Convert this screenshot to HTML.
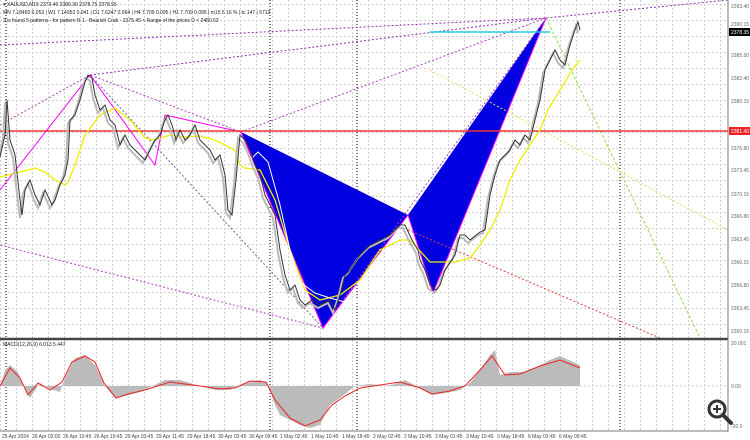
<html><head><style>body{margin:0;background:#fff;overflow:hidden}svg{display:block;font-family:"Liberation Sans",sans-serif}</style></head><body>
<svg width="750" height="440" viewBox="0 0 750 440">
<defs>
<pattern id="gv" width="16" height="440" patternUnits="userSpaceOnUse" x="0"><line x1="0.5" y1="0" x2="0.5" y2="440" stroke="#cfcfcf" stroke-dasharray="2,2"/></pattern>
<pattern id="gh" width="728" height="16" patternUnits="userSpaceOnUse" y="4"><line x1="0" y1="0.5" x2="728" y2="0.5" stroke="#cfcfcf" stroke-dasharray="2,2"/></pattern>
</defs>
<rect width="750" height="440" fill="#fff"/>
<rect x="0" y="0" width="728" height="430" fill="url(#gv)"/>
<rect x="0" y="0" width="728" height="338" fill="url(#gh)"/>
<line x1="0" y1="386" x2="728" y2="386" stroke="#cfcfcf" stroke-dasharray="2,2"/>
<g stroke="#000" stroke-dasharray="1,2"><line x1="6" y1="0" x2="6" y2="430"/><line x1="270" y1="0" x2="270" y2="430"/><line x1="357" y1="0" x2="357" y2="430"/><line x1="620" y1="0" x2="620" y2="430"/></g>
<polygon points="241,132 323,328 408,215" fill="#0000e0"/>
<polygon points="408,215 433,293 546,18" fill="#0000e0"/>
<g fill="none" stroke-width="1" stroke-dasharray="2,2">
<polyline points="0,125 90,75 241,132 323,328 0,245" stroke="#b040c0"/>
<polyline points="90,75 546,18 728,0" stroke="#9030b0"/>
<polyline points="0,45 546,18" stroke="#9030b0"/>
<polyline points="241,132 546,18" stroke="#b040c0"/>
<polyline points="323,328 546,18" stroke="#b040c0"/>
<polyline points="90,75 323,328" stroke="#7060b0"/>
<polyline points="546,18 700,338" stroke="#90e040" stroke-dasharray="3,2"/>
<polyline points="430,70 728,230" stroke="#e0e060"/>
<polyline points="408,230 660,338" stroke="#e04040"/>
</g>
<g fill="none" stroke="#f0f" stroke-width="1"><polyline points="0,190 90,75 155,165 165,115 241,132 323,328 408,215 433,293 546,18"/></g>
<line x1="0" y1="131" x2="728" y2="131" stroke="#e33" stroke-width="1.5"/>
<line x1="430" y1="32" x2="550" y2="32" stroke="#2cd" stroke-width="1.5"/>
<polyline fill="none" stroke="#ee0" stroke-width="1.3" points="0,177 20,172 35,168 45,172 55,180 65,185 68,182 75,165 85,135 100,115 115,108 130,120 145,138 155,140 170,135 185,137 200,136 215,140 225,145 235,150 240,165 245,168 260,170 275,200 290,250 305,290 320,300 340,295 360,280 380,250 400,240 410,240 430,262 455,262 470,258 480,245 490,230 500,210 510,180 520,160 530,145 540,130 548,110 560,90 572,70 580,60"/>
<polyline fill="none" stroke="#fff" stroke-width="1" points="250,160 258,152 268,162 280,205 290,250 300,282 315,293 330,298 345,302 360,300"/>
<polyline fill="none" stroke="#bbb" stroke-width="2" points="0,157 5,135 7,100 10,140 15,155 20,200 22,215 25,190 30,180 35,195 40,205 45,190 52,205 55,200 60,185 65,175 68,160 70,120 75,115 80,100 85,82 88,75 92,78 95,95 100,110 105,105 110,120 115,125 120,145 125,135 130,145 135,150 145,160 150,150 155,140 160,135 165,120 168,115 172,125 176,140 180,130 185,140 190,135 195,125 200,140 210,150 215,160 220,155 225,175 228,210 232,215 236,180 240,135 245,140 250,150 255,165 260,175 265,195 270,205 275,215 280,250 285,275 290,290 295,285 300,300 305,305 312,300 320,305 330,300 335,310 340,295 345,275 350,270 360,255 370,245 380,240 390,235 400,225 405,225 412,240 418,250 420,260 425,270 430,285 436,290 440,285 445,270 455,255 460,235 465,235 470,240 480,232 485,230 490,195 495,175 500,160 510,150 515,140 520,145 525,135 530,140 535,120 540,100 545,70 555,50 560,60 565,65 570,45 575,30 578,22 580,30" transform="translate(-2,3)"/>
<polyline fill="none" stroke="#333" stroke-width="1" points="0,157 5,135 7,100 10,140 15,155 20,200 22,215 25,190 30,180 35,195 40,205 45,190 52,205 55,200 60,185 65,175 68,160 70,120 75,115 80,100 85,82 88,75 92,78 95,95 100,110 105,105 110,120 115,125 120,145 125,135 130,145 135,150 145,160 150,150 155,140 160,135 165,120 168,115 172,125 176,140 180,130 185,140 190,135 195,125 200,140 210,150 215,160 220,155 225,175 228,210 232,215 236,180 240,135 245,140 250,150 255,165 260,175 265,195 270,205 275,215 280,250 285,275 290,290 295,285 300,300 305,305 312,300 320,305 330,300 335,310 340,295 345,275 350,270 360,255 370,245 380,240 390,235 400,225 405,225 412,240 418,250 420,260 425,270 430,285 436,290 440,285 445,270 455,255 460,235 465,235 470,240 480,232 485,230 490,195 495,175 500,160 510,150 515,140 520,145 525,135 530,140 535,120 540,100 545,70 555,50 560,60 565,65 570,45 575,30 578,22 580,30"/>
<line x1="0" y1="339" x2="728" y2="339" stroke="#444" stroke-width="2.5"/>
<path d="M0,386 L5,370 10,365 18,372 25,390 30,398 40,383 50,389 60,392 65,378 75,358 85,355 95,365 105,386 115,398 125,396 140,392 165,380 180,380 200,386 215,390 230,390 245,383 260,380 268,384 275,405 280,415 290,420 300,425 310,428 320,425 330,405 340,398 355,386 370,384 385,386 395,384 405,380 420,388 432,395 445,393 460,390 470,383 480,370 490,355 495,350 500,375 510,372 525,372 535,368 550,360 560,356 580,365 580,386 Z" fill="#bbb"/>
<polyline fill="none" stroke="#e22" stroke-width="1" points="0,386 10,368 20,378 28,395 38,383 50,390 62,382 72,362 85,356 95,362 104,383 116,398 128,394 145,390 170,382 200,386 220,389 235,388 250,381 266,382 275,400 290,418 305,426 320,420 332,405 345,396 360,388 380,385 400,382 420,388 432,394 450,391 465,386 480,370 492,356 505,375 520,374 540,366 560,360 580,368"/>
<line x1="728" y1="0" x2="728" y2="432" stroke="#777"/>
<line x1="0" y1="431" x2="728" y2="431" stroke="#777"/>
<rect x="729" y="28" width="21" height="8" fill="#000"/><rect x="729" y="127" width="21" height="8" fill="#e22"/>
<g font-size="5" fill="#666"><text x="731" y="8">2393.40</text><text x="731" y="26">2390.15</text><text x="731" y="57">2385.50</text><text x="731" y="80">2382.40</text><text x="731" y="103">2380.15</text><text x="731" y="150">2376.80</text><text x="731" y="172">2373.45</text><text x="731" y="196">2370.15</text><text x="731" y="218">2366.80</text><text x="731" y="241">2363.45</text><text x="731" y="264">2360.15</text><text x="731" y="287">2356.80</text><text x="731" y="310">2353.45</text><text x="731" y="333">2350.15</text><text x="731" y="345">20.001</text><text x="731" y="388">0.00</text><text x="731" y="428">-20.0</text></g>
<g font-size="5" fill="#fff"><text x="731" y="34">2378.35</text><text x="731" y="133">2381.40</text></g>
<g font-size="5" fill="#444"><text x="2" y="438">25 Apr 2024</text><text x="32" y="438">26 Apr 02:00</text><text x="63" y="438">26 Apr 10:45</text><text x="94" y="438">26 Apr 19:45</text><text x="125" y="438">29 Apr 03:45</text><text x="156" y="438">29 Apr 11:45</text><text x="187" y="438">29 Apr 18:45</text><text x="218" y="438">30 Apr 02:45</text><text x="249" y="438">30 Apr 09:45</text><text x="280" y="438">1 May 02:45</text><text x="311" y="438">1 May 10:45</text><text x="342" y="438">1 May 18:45</text><text x="373" y="438">2 May 02:45</text><text x="404" y="438">2 May 10:45</text><text x="435" y="438">3 May 01:45</text><text x="466" y="438">3 May 10:45</text><text x="497" y="438">3 May 18:45</text><text x="528" y="438">6 May 03:45</text><text x="559" y="438">6 May 09:45</text></g>
<g font-size="5" fill="#222"><text x="3" y="6">▾ XAUUSD,M15  2379.40 2380.30 2378.75 2378.55</text><text x="3" y="14">MN 7.18450  0.053 | W1 7.14953  0.041 | D1 7.6347  0.064 | H4 7.709  0.095 | H1 7.709  0.095 | m15  5 16 % | tc 147 | 6712</text><text x="3" y="22">3 is found 5 patterns  -  for pattern N 1 - Bearish Crab - 2375.45 &lt; Range of the prices D &lt; 2480.52</text><text x="3" y="346">MACD(12,26,9) 6.013 5.447</text></g>
<circle cx="717" cy="409" r="8" fill="none" stroke="#333" stroke-width="3"/><line x1="723" y1="415" x2="731" y2="423" stroke="#333" stroke-width="4" stroke-linecap="round"/><path d="M713 409h8M717 405v8" stroke="#333" stroke-width="2"/>
</svg></body></html>
